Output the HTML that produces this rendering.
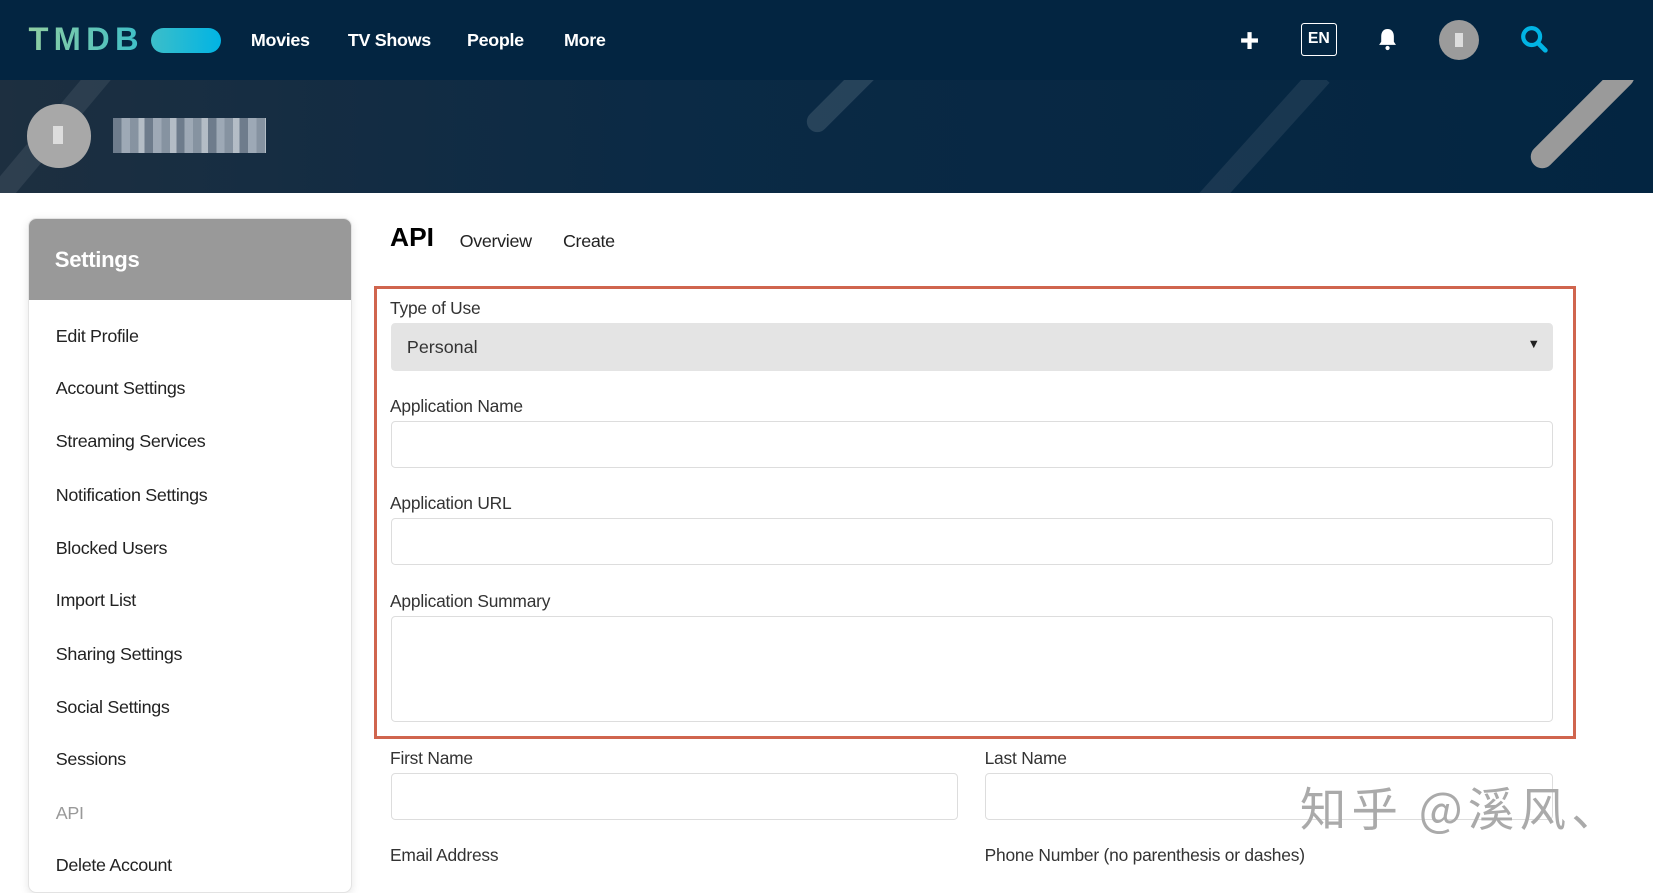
<!DOCTYPE html>
<html><head><meta charset="utf-8"><style>
html{zoom:1.0542}
*{box-sizing:border-box;margin:0;padding:0}
body{width:1568px;height:825px;overflow:hidden;background:#fff;font-family:"Liberation Sans","Noto Sans CJK SC",sans-serif;color:#222;position:relative}
.abs{position:absolute}
nav{position:absolute;left:0;top:0;width:1568px;height:76px;background:#032541}
.logo{left:27px;top:19px;font-size:31px;font-weight:bold;letter-spacing:5px;background:linear-gradient(90deg,#90cea1,#3cbec9);-webkit-background-clip:text;color:transparent}
.pill{left:143px;top:27px;width:67px;height:23px;border-radius:12px;background:linear-gradient(90deg,#3cbec9,#01b4e4)}
.nl{top:28px;color:#fff;font-weight:bold;font-size:17px;letter-spacing:-0.3px}
.banner{left:0;top:76px;width:1568px;height:107px;background:linear-gradient(90deg,#1d2f40 0%,#0b2a45 40%,#032541 100%);overflow:hidden}
.lbl{font-size:16.5px;color:#333;letter-spacing:-0.2px}
.inp{border:1px solid #ddd;border-radius:4px;background:#fff}
.side a{position:absolute;left:25px;font-size:17px;color:#222;letter-spacing:-0.3px}
</style></head><body>
<nav>
<div class="abs logo">TMDB</div>
<div class="abs pill"></div>
<div class="abs nl" style="left:238px">Movies</div>
<div class="abs nl" style="left:330px">TV Shows</div>
<div class="abs nl" style="left:443px">People</div>
<div class="abs nl" style="left:535px">More</div>
<svg class="abs" style="left:1175px;top:28px" width="20" height="20" viewBox="0 0 20 20"><path d="M10 2v16M2 10h16" stroke="#fff" stroke-width="4"/></svg>
<div class="abs" style="left:1234px;top:22px;width:34px;height:31px;border:1px solid #fff;border-radius:3px;color:#fff;font-weight:bold;font-size:15px;text-align:center;line-height:29px">EN</div>
<svg class="abs" style="left:1306px;top:27px" width="20" height="22" viewBox="0 0 20 22"><path d="M10 1c-4 0-6 3-6 7v5l-2 3h16l-2-3V8c0-4-2-7-6-7z" fill="#fff"/><circle cx="10" cy="19" r="2" fill="#fff"/></svg>
<div class="abs" style="left:1365px;top:19px;width:38px;height:38px;border-radius:50%;background:#9b9b9b"><div class="abs" style="left:15px;top:12px;width:8px;height:14px;background:#ddd"></div></div>
<svg class="abs" style="left:1441px;top:24px" width="30" height="28" viewBox="0 0 30 28"><circle cx="12" cy="11" r="8" fill="none" stroke="#01b4e4" stroke-width="4"/><path d="M18 17l7 7" stroke="#01b4e4" stroke-width="4.5" stroke-linecap="round"/></svg>
</nav>
<div class="abs banner">
<div class="abs" style="top:-40px;width:22px;height:240px;background:rgba(255,255,255,0.08);transform:rotate(40deg);transform-origin:top left;left:110px"></div>
<div class="abs" style="left:790px;top:-30px;width:20px;height:90px;background:rgba(255,255,255,0.12);border-radius:10px;transform:rotate(45deg)"></div>
<div class="abs" style="left:1175px;top:-30px;width:22px;height:200px;background:rgba(255,255,255,0.08);transform:rotate(42deg)"></div>
<div class="abs" style="left:1490px;top:-30px;width:22px;height:130px;background:#9a9a9a;border-radius:11px;transform:rotate(45deg)"></div>
<div class="abs" style="left:26px;top:23px;width:60px;height:60px;border-radius:50%;background:#a8a8a8"><div class="abs" style="left:24px;top:21px;width:10px;height:17px;background:#ddd"></div></div>
<div class="abs" style="left:107px;top:36px;width:145px;height:33px;background:repeating-linear-gradient(90deg,#7d8a99 0 8px,#b5bfca 8px 16px,#9aa5b2 16px 24px,#cfd6dd 24px 30px);opacity:.85"></div>
</div>
<div class="abs side" style="left:27px;top:207px;width:307px;height:640px;border:1px solid #e3e3e3;border-radius:8px;box-shadow:0 2px 8px rgba(0,0,0,.1);background:#fff;overflow:hidden">
<div class="abs" style="left:0;top:0;width:307px;height:77px;background:#999"></div>
<div class="abs" style="left:24px;top:26px;color:#fff;font-weight:bold;font-size:21px;letter-spacing:-0.3px">Settings</div>
<a style="top:101px">Edit Profile</a>
<a style="top:151px">Account Settings</a>
<a style="top:201px">Streaming Services</a>
<a style="top:252px">Notification Settings</a>
<a style="top:302px">Blocked Users</a>
<a style="top:352px">Import List</a>
<a style="top:403px">Sharing Settings</a>
<a style="top:453px">Social Settings</a>
<a style="top:503px">Sessions</a>
<a style="top:554px;color:#999">API</a>
<a style="top:603px">Delete Account</a>
</div>
<div class="abs" style="left:370px;top:211px;font-size:25px;font-weight:bold;color:#000">API</div>
<div class="abs" style="left:436px;top:219px;font-size:17px;letter-spacing:-0.3px">Overview</div>
<div class="abs" style="left:534px;top:219px;font-size:17px;letter-spacing:-0.3px">Create</div>
<div class="abs" style="left:355px;top:271px;width:1140px;height:430px;border:3px solid #d0654e"></div>
<div class="abs lbl" style="left:370px;top:283px">Type of Use</div>
<div class="abs" style="left:371px;top:306px;width:1102px;height:46px;background:#e4e4e4;border-radius:4px"><span class="abs" style="left:15px;top:14px;font-size:17px;color:#333">Personal</span><span class="abs" style="left:1078px;top:14px;font-size:12px">▼</span></div>
<div class="abs lbl" style="left:370px;top:376px">Application Name</div>
<div class="abs inp" style="left:371px;top:399px;width:1102px;height:45px"></div>
<div class="abs lbl" style="left:370px;top:468px">Application URL</div>
<div class="abs inp" style="left:371px;top:491px;width:1102px;height:45px"></div>
<div class="abs lbl" style="left:370px;top:561px">Application Summary</div>
<div class="abs inp" style="left:371px;top:584px;width:1102px;height:101px"></div>
<div class="abs lbl" style="left:370px;top:710px">First Name</div>
<div class="abs inp" style="left:371px;top:733px;width:538px;height:45px"></div>
<div class="abs lbl" style="left:934px;top:710px">Last Name</div>
<div class="abs inp" style="left:934px;top:733px;width:539px;height:45px"></div>
<div class="abs lbl" style="left:370px;top:802px">Email Address</div>
<div class="abs lbl" style="left:934px;top:802px">Phone Number (no parenthesis or dashes)</div>
<div class="abs" style="left:1233px;top:733px;font-size:44px;color:#aaa;font-family:'Noto Sans CJK SC',sans-serif;letter-spacing:5px">知乎 @溪风、</div>
</body></html>
